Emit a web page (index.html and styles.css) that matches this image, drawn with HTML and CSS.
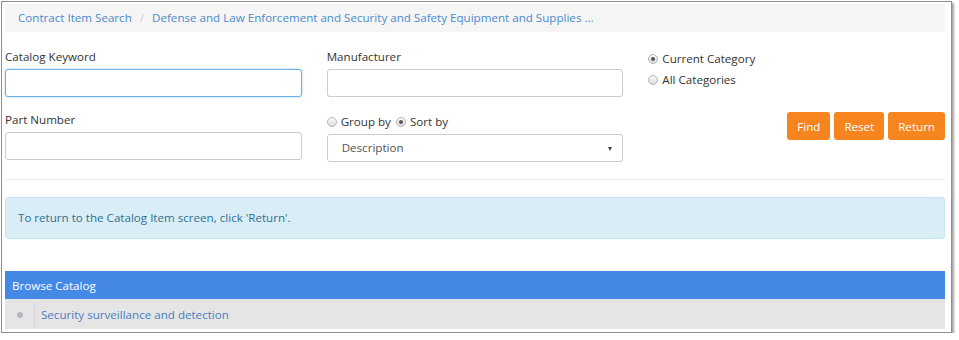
FILE: index.html
```html
<!DOCTYPE html>
<html lang="en">
<head>
    <meta charset="UTF-8">
    <title>Contract Item Search</title>
    <link rel="stylesheet" href="styles.css">
</head>
<body>
    <div class="frame">
        <!-- Breadcrumb -->
        <div class="breadcrumb">
            <a href="#">Contract Item Search</a>
            <span class="sep">/</span>
            <a href="#">Defense and Law Enforcement and Security and Safety Equipment and Supplies ...</a>
        </div>

        <!-- Search form -->
        <div class="search-form">
            <div class="field">
                <label class="field-label">Catalog Keyword</label>
                <div class="input focused"></div>
            </div>
            <div class="field">
                <label class="field-label">Manufacturer</label>
                <div class="input"></div>
            </div>
            <div class="scope">
                <div class="radio"><span class="dot checked"></span>Current Category</div>
                <div class="radio"><span class="dot"></span>All Categories</div>
            </div>

            <div class="field">
                <label class="field-label">Part Number</label>
                <div class="input"></div>
            </div>
            <div class="field sort-field">
                <div class="radio-line">
                    <span class="radio"><span class="dot"></span>Group by</span>
                    <span class="radio"><span class="dot checked"></span>Sort by</span>
                </div>
                <div class="input select">Description<span class="caret"></span></div>
            </div>
            <div class="actions">
                <button class="btn">Find</button>
                <button class="btn">Reset</button>
                <button class="btn">Return</button>
            </div>
        </div>

        <hr class="divider">

        <!-- Messaggio info -->
        <div class="alert">To return to the Catalog Item screen, click 'Return'.</div>

        <!-- Browse catalog -->
        <div class="panel">
            <div class="panel-heading">Browse Catalog</div>
            <div class="tree-row">
                <span class="bullet"><span></span></span>
                <a href="#">Security surveillance and detection</a>
            </div>
        </div>
    </div>
</body>
</html>
```

FILE: styles.css
```css
/* Reset di base */
* { margin: 0; padding: 0; box-sizing: border-box; }

body {
    background: #ffffff;
    font-family: 'Open Sans', 'Liberation Sans', sans-serif;
    font-size: 11.6px;
    line-height: 18px;
    color: #333333;
}

a {
    color: #4a8bcc;
    text-decoration: none;
}

/* Cornice della finestra */
.frame {
    width: 951px;
    margin: 1px 0 0 1px;
    padding: 2px 6px 3px 3px;
    border: 1px solid #8e8e8e;
    box-shadow: 2px 2px 2px rgba(0, 0, 0, 0.35);
}

/* Breadcrumb */
.breadcrumb {
    background: #f5f5f5;
    padding: 5px 13px;
    white-space: nowrap;
}

.breadcrumb .sep {
    color: #cccccc;
    padding: 0 5px;
}

/* Form di ricerca */
.search-form {
    display: grid;
    grid-template-columns: 1fr 1fr 1fr;
    column-gap: 25px;
    row-gap: 14px;
    margin-top: 16px;
}

.field-label {
    display: block;
    margin-bottom: 3px;
}

.input {
    height: 28px;
    border: 1px solid #cccccc;
    border-radius: 3px;
    background: #ffffff;
}

.input.focused {
    border-color: #66afe9;
    box-shadow: 0 0 3px rgba(102, 175, 233, 0.5);
}

.sort-field {
    padding-top: 2px;
}

.radio-line {
    display: flex;
    gap: 5px;
    margin-bottom: 3px;
}

.radio {
    display: flex;
    align-items: center;
}

.dot {
    width: 10px;
    height: 10px;
    border-radius: 50%;
    border: 1px solid #b4b4b4;
    background: linear-gradient(#fbfbfb, #dcdcdc);
    margin-right: 4px;
    position: relative;
}

.dot.checked::after {
    content: '';
    position: absolute;
    left: 2px;
    top: 2px;
    width: 4px;
    height: 4px;
    border-radius: 50%;
    background: #555555;
}

.select {
    position: relative;
    padding: 4px 14px;
    color: #555555;
}

.caret {
    position: absolute;
    right: 10px;
    top: 12px;
    border-left: 2.5px solid transparent;
    border-right: 2.5px solid transparent;
    border-top: 4px solid #444444;
}

.scope {
    padding-top: 2px;
    display: flex;
    flex-direction: column;
    gap: 3px;
}

.actions {
    display: flex;
    justify-content: flex-end;
    align-items: flex-start;
    gap: 4px;
    padding-top: 1px;
}

.btn {
    height: 28px;
    padding: 0 10px;
    border: none;
    border-radius: 3px;
    background: #f6841f;
    color: #ffffff;
    font-family: inherit;
    font-size: 11.6px;
}

/* Separatore */
.divider {
    border: none;
    border-top: 1px solid #eeeeee;
    margin-top: 17px;
}

/* Messaggio */
.alert {
    margin-top: 17px;
    padding: 11px 12px;
    background: #d9edf7;
    border: 1px solid #c4e6f3;
    border-radius: 3px;
    color: #31708f;
}

/* Pannello catalogo */
.panel {
    margin-top: 32px;
}

.panel-heading {
    background: #4489e5;
    color: #ffffff;
    padding: 6px 7px 4px;
}

.tree-row {
    display: flex;
    align-items: center;
    height: 30px;
    padding-top: 2px;
    background: #e5e5e5;
}

.bullet {
    width: 30px;
    height: 26px;
    display: flex;
    align-items: center;
    justify-content: center;
    border-right: 1px solid #d5d5d5;
    margin-right: 6px;
}

.bullet span {
    width: 6px;
    height: 6px;
    border-radius: 50%;
    background: #b3b6c4;
}

.tree-row a {
    color: #4a7dbf;
}
```
